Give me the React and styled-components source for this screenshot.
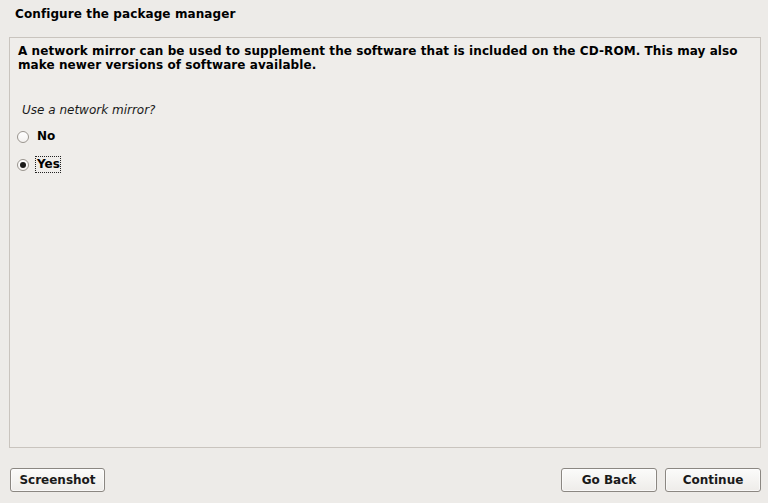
import React, { useState } from 'react';
import styled, { createGlobalStyle } from 'styled-components';

const GlobalStyle = createGlobalStyle`
	html, body {
		margin: 0;
		padding: 0;
		background: #edebe8;
	}
	body {
		font-family: 'DejaVu Sans', 'Liberation Sans', sans-serif;
		font-size: 12px;
		color: #000;
	}
`;

const Window = styled.div`
	display: flex;
	flex-direction: column;
	width: 768px;
	height: 503px;
	background: #edebe8;
	box-sizing: border-box;
`;

const Title = styled.h1`
	margin: 0;
	padding: 7px 15px 0;
	height: 37px;
	box-sizing: border-box;
	font-size: 12px;
	font-weight: bold;
	line-height: 14px;
	letter-spacing: 0.1px;
	flex: none;
`;

const Panel = styled.div`
	flex: 1;
	margin: 0 7px 0 9px;
	padding: 6px 8px 7px;
	border: 1px solid #c9c4be;
	background: #efedea;
	display: flex;
	flex-direction: column;
`;

const Description = styled.p`
	margin: 0;
	font-weight: bold;
	line-height: 14px;
	letter-spacing: 0.08px;
`;

const Question = styled.p`
	margin: 31px 0 0 4px;
	font-style: italic;
	line-height: 14px;
	color: #1a1a1a;
`;

const Options = styled.div`
	display: flex;
	flex-direction: column;
	gap: 9px;
	margin: 10px 0 0 -1px;
`;

const Option = styled.label`
	display: flex;
	align-items: center;
	gap: 6px;
	height: 19px;
	font-weight: bold;
	cursor: pointer;
`;

const Circle = styled.span`
	position: relative;
	width: 12px;
	height: 12px;
	border-radius: 50%;
	border: 1px solid #9a958f;
	background: linear-gradient(#ffffff, #f4f2f0);
	box-sizing: border-box;
	flex: none;
	&::after {
		content: '';
		display: ${props => (props.checked ? 'block' : 'none')};
		position: absolute;
		left: 2px;
		top: 2px;
		width: 6px;
		height: 6px;
		border-radius: 50%;
		background: #1a1a1a;
	}
`;

const OptionText = styled.span`
	padding: 1px 1px 1px 2px;
	line-height: 15px;
	outline: ${props => (props.focused ? '1px dotted #222' : 'none')};
	outline-offset: -1px;
`;

const Footer = styled.div`
	display: flex;
	align-items: flex-start;
	height: 55px;
	padding: 20px 7px 0 10px;
	box-sizing: border-box;
	gap: 8px;
	flex: none;
`;

const Spacer = styled.div`
	flex: 1;
`;

const Button = styled.button`
	width: ${props => props.w || 96}px;
	height: 24px;
	padding: 0;
	border: 1px solid #8b8782;
	border-radius: 3px;
	background: linear-gradient(#fbfbfa, #eeece9);
	font-family: 'DejaVu Sans', 'Liberation Sans', sans-serif;
	font-size: 12px;
	font-weight: bold;
	color: #1a1a1a;
	box-shadow: inset 0 0 0 1px rgba(255, 255, 255, 0.6);
	cursor: pointer;
`;

export default function App() {
	const [mirror, setMirror] = useState('Yes');

	return (
		<Window>
			<GlobalStyle />
			<Title>Configure the package manager</Title>
			<Panel>
				<Description>
					A network mirror can be used to supplement the software that is included on the CD-ROM. This may also
					<br />
					make newer versions of software available.
				</Description>
				<Question>Use a network mirror?</Question>
				<Options>
					{['No', 'Yes'].map(opt => (
						<Option key={opt} onClick={() => setMirror(opt)}>
							<Circle checked={mirror === opt} />
							<OptionText focused={mirror === opt}>{opt}</OptionText>
						</Option>
					))}
				</Options>
			</Panel>
			<Footer>
				<Button w={95}>Screenshot</Button>
				<Spacer />
				<Button>Go Back</Button>
				<Button>Continue</Button>
			</Footer>
		</Window>
	);
}
